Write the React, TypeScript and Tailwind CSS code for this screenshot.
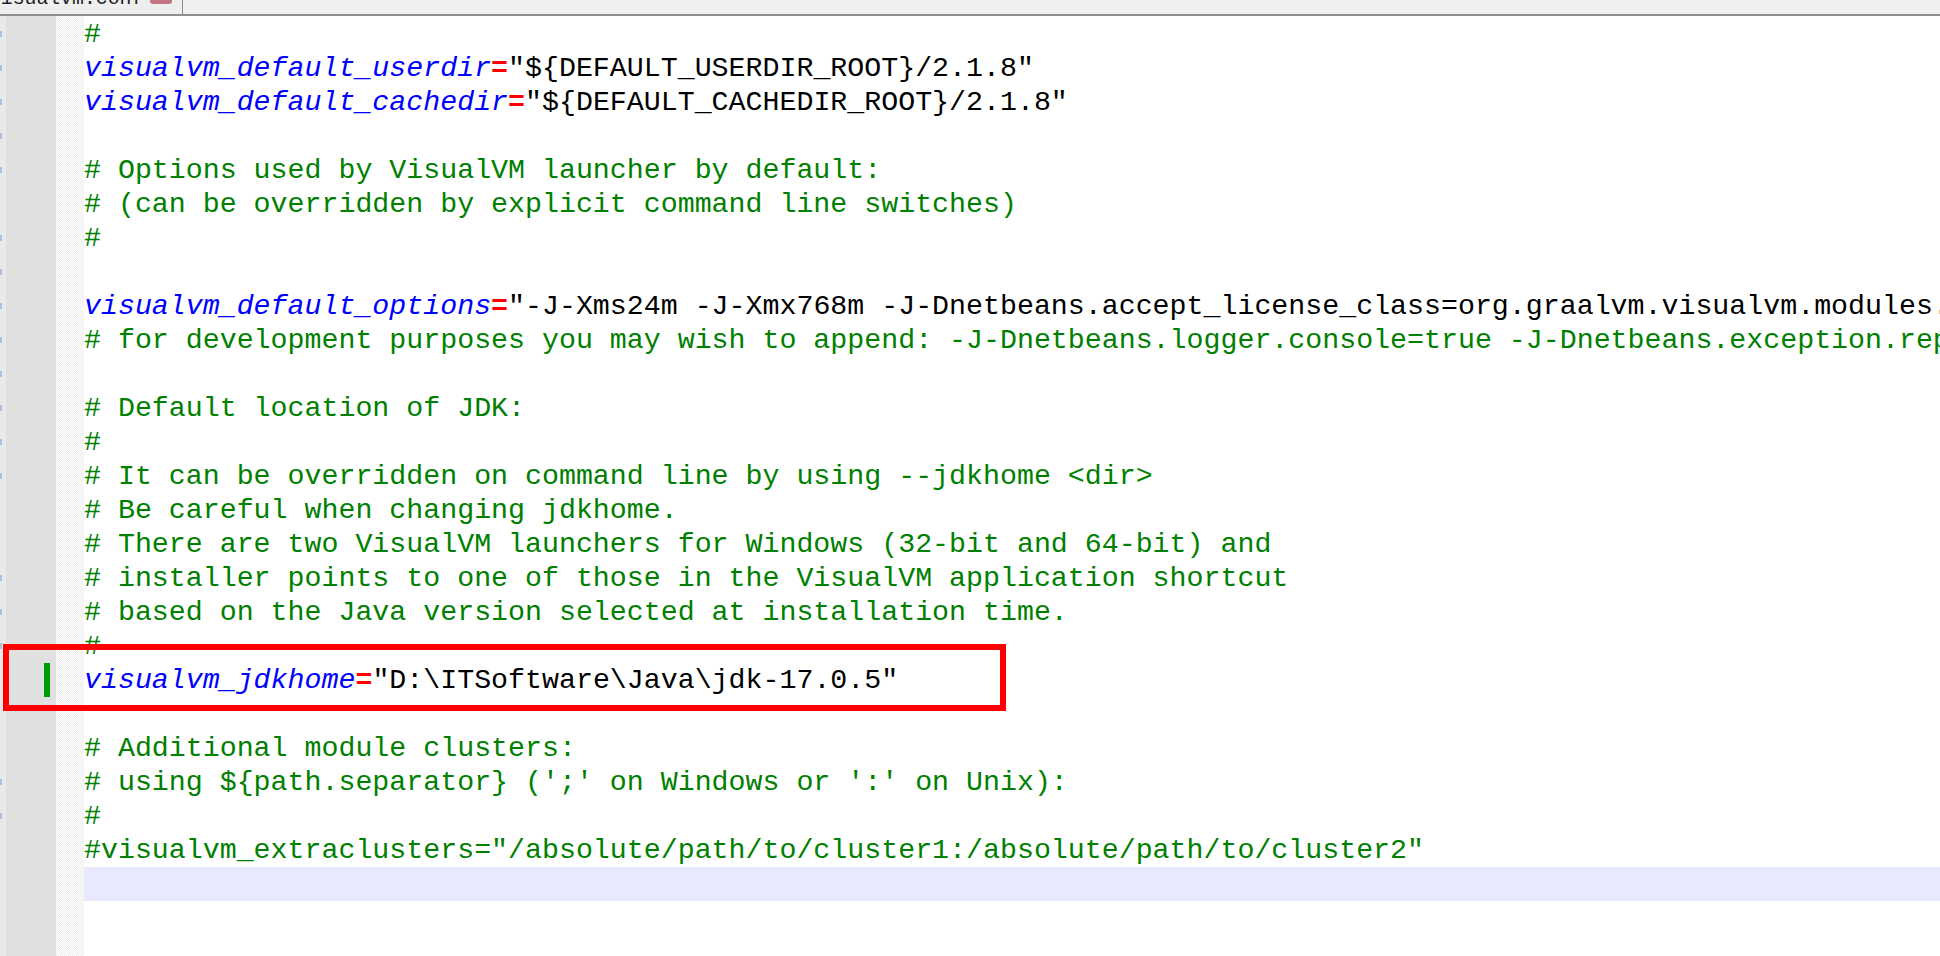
import React from "react";

type Seg = { t: string; k: "c" | "k" | "e" | "v" };

const kv = (key: string, val: string): Seg[] => [
  { t: key, k: "k" },
  { t: "=", k: "e" },
  { t: val, k: "v" },
];
const cm = (t: string): Seg[] => [{ t, k: "c" }];

const lines: Seg[][] = [
  cm("#"),
  kv("visualvm_default_userdir", '"${DEFAULT_USERDIR_ROOT}/2.1.8"'),
  kv("visualvm_default_cachedir", '"${DEFAULT_CACHEDIR_ROOT}/2.1.8"'),
  [],
  cm("# Options used by VisualVM launcher by default:"),
  cm("# (can be overridden by explicit command line switches)"),
  cm("#"),
  [],
  kv(
    "visualvm_default_options",
    '"-J-Xms24m -J-Xmx768m -J-Dnetbeans.accept_license_class=org.graalvm.visualvm.modules.startup.AcceptLicense -J-Dsun.jvmstat.perdata.syncWaitMs=10000"'
  ),
  cm(
    "# for development purposes you may wish to append: -J-Dnetbeans.logger.console=true -J-Dnetbeans.exception.report.min.level=99999"
  ),
  [],
  cm("# Default location of JDK:"),
  cm("#"),
  cm("# It can be overridden on command line by using --jdkhome <dir>"),
  cm("# Be careful when changing jdkhome."),
  cm("# There are two VisualVM launchers for Windows (32-bit and 64-bit) and"),
  cm("# installer points to one of those in the VisualVM application shortcut"),
  cm("# based on the Java version selected at installation time."),
  cm("#"),
  kv("visualvm_jdkhome", '"D:\\ITSoftware\\Java\\jdk-17.0.5"'),
  [],
  cm("# Additional module clusters:"),
  cm("# using ${path.separator} (';' on Windows or ':' on Unix):"),
  cm("#"),
  cm('#visualvm_extraclusters="/absolute/path/to/cluster1:/absolute/path/to/cluster2"'),
  [],
];

const stripMarks = new Set([0, 1, 2, 3, 4, 6, 7, 8, 9, 10, 11, 12, 13, 16, 17, 18, 22, 23]);

function SegSpan({ s }: { s: Seg }) {
  if (s.k === "c") return <span className="text-[#008000]">{s.t}</span>;
  if (s.k === "k") return <span className="italic text-[#0000ff]">{s.t}</span>;
  if (s.k === "e") return <span className="font-bold text-[#ff0000]">{s.t}</span>;
  return <span className="text-black">{s.t}</span>;
}

export default function App() {
  return (
    <div className="relative flex h-[956px] w-[1940px] flex-col overflow-hidden bg-white font-['Liberation_Mono','Courier_New',monospace]">
      {/* tab bar */}
      <div className="flex h-[14px] shrink-0 overflow-hidden bg-[#eeeeee]">
        <div className="flex w-[183px] shrink-0 items-start overflow-hidden border-r border-[#8a8a8a]">
          <span className="-ml-[11px] -mt-[11px] whitespace-pre text-[19.8px] leading-[20px] text-[#222222]">
            visualvm.conf
          </span>
          <span className="ml-[7px] h-[4px] w-[22px] shrink-0 rounded-b-[3px] bg-[#c27683]" />
        </div>
        <div className="flex-1 bg-[#f0f0f0]" />
      </div>
      <div className="h-[2px] shrink-0 bg-[#8f8f8f]" />

      {/* editor */}
      <div className="flex min-h-0 flex-1">
        {/* left strip */}
        <div className="flex w-[6px] shrink-0 flex-col bg-[#e9e9e9] pt-[1px]">
          {lines.map((_, i) => (
            <div key={i} className="flex h-[34px] items-center">
              {stripMarks.has(i) ? <span className="h-[6px] w-[2px] bg-[#a9c3df]" /> : null}
            </div>
          ))}
        </div>
        {/* change-history margin */}
        <div className="flex w-[50px] shrink-0 flex-col bg-[#e0e0e0] pt-[1px]">
          {lines.map((_, i) => (
            <div key={i} className="h-[34px]">
              {i === 19 ? <div className="ml-[38px] h-[34px] w-[6px] bg-[#009b00]" /> : null}
            </div>
          ))}
        </div>
        {/* fold margin */}
        <div className="w-[28px] shrink-0 bg-[repeating-conic-gradient(#ececec_0%_25%,#ffffff_0%_50%)] bg-[length:2px_2px]" />
        {/* text */}
        <div className="min-w-0 flex-1 overflow-hidden pt-[1px] text-[28.27px] leading-[34px]">
          {lines.map((segs, i) => (
            <div
              key={i}
              className={
                "h-[34px] whitespace-pre " + (i === lines.length - 1 ? "bg-[#e8e8ff]" : "")
              }
            >
              {segs.map((s, j) => (
                <SegSpan key={j} s={s} />
              ))}
            </div>
          ))}
        </div>
      </div>

      {/* red annotation box */}
      <div className="pointer-events-none absolute left-[3px] top-[644px] h-[67px] w-[1003px] border-[6px] border-[#ff0000]" />
    </div>
  );
}
